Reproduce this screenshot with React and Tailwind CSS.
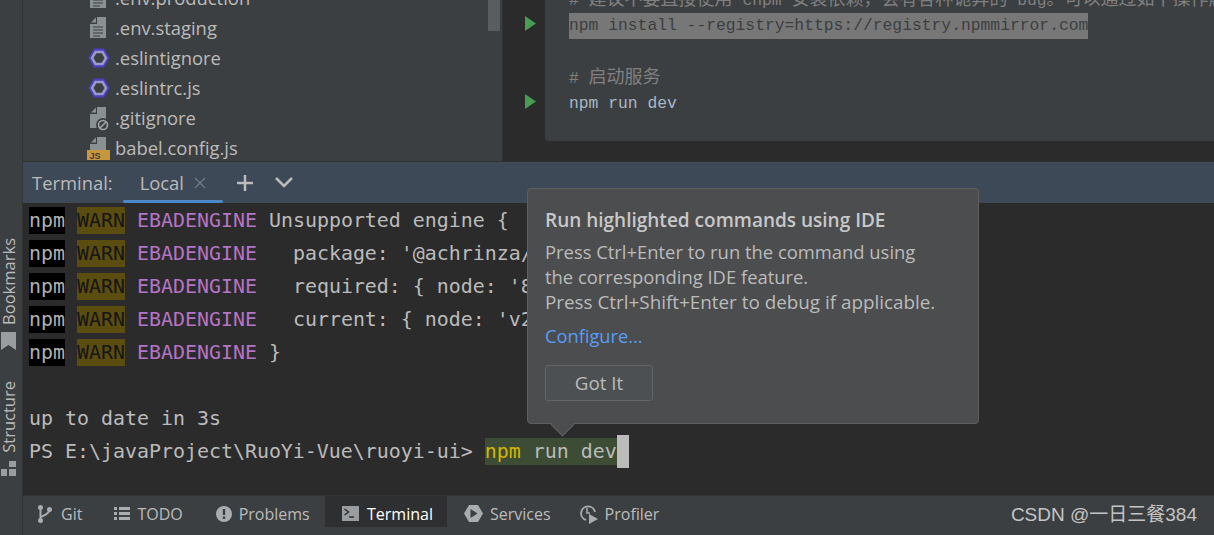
import React from 'react';

const mono = { fontFamily: '"DejaVu Sans Mono", monospace' };

const treeRows = [
	{ name: '.env.production', icon: 'doc' },
	{ name: '.env.staging', icon: 'doc' },
	{ name: '.eslintignore', icon: 'eslint' },
	{ name: '.eslintrc.js', icon: 'eslint' },
	{ name: '.gitignore', icon: 'ignore' },
	{ name: 'babel.config.js', icon: 'js' },
];

const TreeIcon = ({ kind }) => {
	if (kind === 'eslint') {
		return (
			<svg width="24" height="24" viewBox="0 0 24 24" className="shrink-0">
				<path d="M7 2.500h10l5.500 9.500-5.500 9.500H7L1.500 12z" fill="#4b3fc4" />
				<path d="M8.500 6h7l3.500 6-3.500 6h-7L5 12z" fill="#3c3f41" stroke="#9a9ac8" strokeWidth="2.500" />
			</svg>
		);
	}
	return (
		<svg width="24" height="24" viewBox="0 0 24 24" className="shrink-0 overflow-visible">
			<path d="M10 1h9v21H3V8h7z" fill="#8a9194" />
			<path d="M4 6.500L9 1.500v5z" fill="#8a9194" />
			{kind === 'doc' && (
				<path d="M6 11h10M6 14h10M6 17h10M6 20h7" stroke="#3c3f41" strokeWidth="1.200" />
			)}
			{kind === 'ignore' && (
				<>
					<circle cx="16" cy="19" r="7" fill="#3c3f41" />
					<circle cx="16" cy="19" r="4.500" fill="none" stroke="#a0a5a8" strokeWidth="1.600" />
					<path d="M13 22l6-6" stroke="#a0a5a8" strokeWidth="1.600" />
				</>
			)}
			{kind === 'js' && (
				<>
					<rect x="0" y="14" width="23" height="10" fill="#c8963c" />
					<text x="2.500" y="23" fontSize="9" fontWeight="700" fill="#3c3f41" fontFamily="Liberation Sans, sans-serif">JS</text>
				</>
			)}
		</svg>
	);
};

const RunIcon = () => (
	<svg width="11" height="15" viewBox="0 0 11 15" className="shrink-0">
		<path d="M0 0l11 7.500L0 15z" fill="#499c54" />
	</svg>
);

const lines = [
	{ rest: 'Unsupported engine {' },
	{ rest: "  package: '@achrinza/node-ipc@9.2.2'," },
	{ rest: "  required: { node: '8 || 10 || 12' }," },
	{ rest: "  current: { node: 'v20.11.0' }" },
	{ rest: '}' },
];

const toolTabs = [
	{ name: 'Git', icon: 'git', gap: 'gap-[9px]', left: 'ml-[15px]' },
	{ name: 'TODO', icon: 'todo', gap: 'gap-[7px]', left: 'ml-[32px]' },
	{ name: 'Problems', icon: 'problems', gap: 'gap-[7px]', left: 'ml-[33px]' },
];

const ToolIcon = ({ kind }) => {
	if (kind === 'git') {
		return (
			<svg width="14" height="18" viewBox="0 0 14 18" fill="none" stroke="#a9adb0" strokeWidth="2" className="shrink-0">
				<circle cx="2.500" cy="2.500" r="1.500" fill="#a9adb0" />
				<circle cx="2.500" cy="15.500" r="1.500" fill="#a9adb0" />
				<circle cx="11.500" cy="4.500" r="1.500" fill="#a9adb0" />
				<path d="M2.500 2.500v13M11.500 4.500c0 4-4 5-8 7.500" />
			</svg>
		);
	}
	if (kind === 'todo') {
		return (
			<svg width="16" height="13" viewBox="0 0 16 13" fill="#a9adb0" className="shrink-0">
				<path d="M0 0h3v3H0zM5 0h11v3H5zM0 5h3v3H0zM5 5h11v3H5zM0 10h3v3H0zM5 10h11v3H5z" />
			</svg>
		);
	}
	if (kind === 'problems') {
		return (
			<svg width="16" height="16" viewBox="0 0 16 16" className="shrink-0">
				<circle cx="8" cy="8" r="8" fill="#a9adb0" />
				<path d="M6.800 3h2.400v6H6.800zM6.800 10.500h2.400V13H6.800z" fill="#3c3f41" />
			</svg>
		);
	}
	if (kind === 'terminal') {
		return (
			<svg width="17" height="15" viewBox="0 0 17 15" className="shrink-0">
				<rect width="17" height="15" fill="#9a9da0" />
				<path d="M2.500 3l4 3-4 3" fill="none" stroke="#2d2f30" strokeWidth="1.500" />
				<path d="M7 11h5" stroke="#2d2f30" strokeWidth="1.500" />
			</svg>
		);
	}
	if (kind === 'services') {
		return (
			<svg width="19" height="17" viewBox="0 0 19 17" className="shrink-0">
				<path d="M5 0h9l5 8.500-5 8.500H5L0 8.500z" fill="#a9adb0" />
				<path d="M6.500 4l7 4.500-7 4.500z" fill="#3c3f41" />
			</svg>
		);
	}
	return (
		<svg width="20" height="20" viewBox="0 0 20 20" fill="none" className="shrink-0">
			<path d="M7 16a7 7 0 1 1 9-8" stroke="#a9adb0" strokeWidth="1.800" />
			<path d="M8 4v5h3" stroke="#a9adb0" strokeWidth="1.500" />
			<path d="M10 10l9 5-9 5z" fill="#a9adb0" />
		</svg>
	);
};

const App = () => {
	return (
		<div
			className="w-[1214px] h-[535px] overflow-hidden relative flex bg-[#2b2b2b] text-[#bbbbbb]"
			style={{ fontFamily: '"Open Sans", sans-serif' }}
		>
			{/* left tool strip */}
			<div className="w-[23px] shrink-0 bg-[#3c3f41] border-r border-[#323232] flex flex-col items-start pl-[1px] pt-[238px]">
				<div className="w-[15px] flex flex-col items-center">
					<div className="[writing-mode:vertical-rl] rotate-180 text-[16.500px] leading-[18px] text-center whitespace-nowrap">
						Bookmarks
					</div>
					<svg width="15" height="18" viewBox="0 0 15 18" className="mt-[7px] shrink-0">
						<path d="M0 0h15v18l-7.500-5L0 18z" fill="#9a9da0" />
					</svg>
					<div className="[writing-mode:vertical-rl] rotate-180 text-[16.500px] leading-[18px] mt-[31px] text-center whitespace-nowrap">
						Structure
					</div>
					<svg width="15" height="15" viewBox="0 0 15 15" fill="#9a9da0" className="mt-[8px] shrink-0">
						<path d="M8 0h7v6H8zM0 8h6v7H0zM8 8h7v7H8z" />
					</svg>
				</div>
			</div>

			<div className="flex-1 min-w-0 flex flex-col">
				{/* project tree + editor */}
				<div className="h-[162px] shrink-0 flex border-b border-[#323232]">
					<div className="w-[480px] shrink-0 bg-[#3c3f41] overflow-hidden relative border-r border-[#323232]">
						<div className="-mt-[17px] pl-[64px] flex flex-col">
							{treeRows.map((row) => (
								<div key={row.name} className="h-[30px] flex items-center gap-[4px] text-[18.400px] text-[#bbbbbb]">
									<TreeIcon kind={row.icon} />
									<span>{row.name}</span>
								</div>
							))}
						</div>
						<div className="absolute right-[2px] top-0 w-[12px] h-[31px] bg-[#5a5c5e]" />
					</div>
					<div className="w-[42px] shrink-0 bg-[#2b2b2b] flex flex-col items-start pl-[22px] pt-[16px]">
						<RunIcon />
						<div className="mt-[63px]">
							<RunIcon />
						</div>
					</div>
					<div className="flex-1 min-w-0 pb-[20px] bg-[#2b2b2b]">
						<div
							className="h-full bg-[#3c3f41] rounded-bl-[4px] pl-[24px] text-[16.330px] leading-[26px] overflow-hidden whitespace-nowrap"
							style={{ fontFamily: '"Liberation Mono", "Noto Sans CJK SC", monospace' }}
						>
							<div className="-mt-[13px] text-[#808080] h-[26px]">
								# <span className="text-[18px]">建议不要直接使用</span> cnpm <span className="text-[18px]">安装依赖，会有各种诡异的</span> bug<span className="text-[18px]">。可以通过如下操作解决</span>
							</div>
							<div className="h-[26px]">
								<span className="bg-[#777777] text-[#3c3f41] inline-block">npm install --registry=https://registry.npmmirror.com</span>
							</div>
							<div className="h-[26px]" />
							<div className="text-[#808080] h-[26px]">
								# <span className="text-[18px]">启动服务</span>
							</div>
							<div className="text-[#a9b7c6] h-[26px]">npm run dev</div>
						</div>
					</div>
				</div>

				{/* terminal header */}
				<div className="h-[41px] shrink-0 bg-[#3d4956] flex items-center pl-[9px] text-[18.400px]">
					<span className="text-[#bbbbbb]">Terminal:</span>
					<div className="relative h-full w-[100px] ml-[10px] pl-[17px] flex items-center">
						<span>Local</span>
						<svg width="12" height="12" viewBox="0 0 12 12" stroke="#6e7b88" strokeWidth="1.300" className="ml-[10px]">
							<path d="M1 1l10 10M11 1L1 11" />
						</svg>
						<div className="absolute left-0 right-0 bottom-0 h-[3px] rounded-full bg-[#4a88c7]" />
					</div>
					<svg width="16" height="16" viewBox="0 0 16 16" stroke="#bbbbbb" strokeWidth="2.500" className="ml-[14px]">
						<path d="M8 0v16M0 8h16" />
					</svg>
					<svg width="18" height="11" viewBox="0 0 18 11" fill="none" stroke="#bbbbbb" strokeWidth="2.500" className="ml-[22px]">
						<path d="M1 1l8 8 8-8" />
					</svg>
				</div>

				{/* terminal body */}
				<div className="flex-1 min-h-0 bg-[#2b2b2b] pl-[6px] pt-[1px] text-[19.930px] leading-[33px] whitespace-pre overflow-hidden" style={mono}>
					{lines.map((line, i) => (
						<div key={i} className="h-[33px] flex items-center">
							<span className="bg-black text-[#b0b0b0] h-[27px] leading-[27px]">npm</span>
							<span> </span>
							<span className="bg-[#5b4c10] text-[#161616] h-[27px] leading-[27px]">WARN</span>
							<span> </span>
							<span className="text-[#b574c4]">EBADENGINE</span>
							<span> </span>
							<span className="text-[#bbbbbb]">{line.rest}</span>
						</div>
					))}
					<div className="h-[33px]" />
					<div className="h-[33px]">up to date in 3s</div>
					<div className="h-[33px] flex items-center">
						<span>PS E:\javaProject\RuoYi-Vue\ruoyi-ui&gt; </span>
						<span className="bg-[#3c4c35] h-[27px] flex items-center">
							<span className="text-[#d6b500]">npm</span>
							<span> run dev</span>
						</span>
						<span className="w-[12px] h-[33px] bg-[#bbbbbb]" />
					</div>
				</div>

				{/* bottom tool bar */}
				<div className="h-[40px] shrink-0 bg-[#3c3f41] border-t border-[#323232] flex items-start text-[16px] relative">
					<div className="flex items-center h-[35px] w-[302px] shrink-0">
						{toolTabs.map((tab) => (
							<div key={tab.name} className={`flex items-center ${tab.gap} ${tab.left}`}>
								<ToolIcon kind={tab.icon} />
								<span>{tab.name}</span>
							</div>
						))}
					</div>
					<div className="h-[31px] w-[122px] shrink-0 bg-[#2d2f30] flex items-center pt-[4px] pl-[17px] gap-[8px] text-white">
						<ToolIcon kind="terminal" />
						<span>Terminal</span>
					</div>
					<div className="flex items-center h-[35px] gap-[7px] ml-[17px]">
						<ToolIcon kind="services" />
						<span>Services</span>
					</div>
					<div className="flex items-center h-[35px] gap-[6px] ml-[28px]">
						<ToolIcon kind="profiler" />
						<span>Profiler</span>
					</div>
					<span
						className="ml-auto mr-[17px] h-[39px] flex items-center text-[19px] text-[#c4c4c4]"
						style={{ fontFamily: '"Liberation Sans", "Noto Sans CJK SC", sans-serif' }}
					>
						CSDN @一日三餐384
					</span>
				</div>
			</div>

			{/* hint popup over the terminal */}
			<div className="absolute left-[527px] top-[188px] w-[452px] h-[236px] bg-[#4c4d4e] border border-[#5e6060] rounded-[4px] pl-[17px] pt-[19px] text-[#bbbbbb] text-[18.400px] leading-[25px]">
				<div className="font-semibold text-[19px] text-[#c8c8c8]">Run highlighted commands using IDE</div>
				<div className="mt-[6px]">
					<div>Press Ctrl+Enter to run the command using</div>
					<div>the corresponding IDE feature.</div>
					<div className="text-[18.850px] mt-[1px]">Press Ctrl+Shift+Enter to debug if applicable.</div>
				</div>
				<div className="mt-[8px] text-[18.250px] text-[#589df6]">Configure...</div>
				<div className="mt-[17px] w-[108px] h-[36px] rounded-[3px] border border-[#646567] bg-[#4c5052] flex items-center justify-center text-[18.800px]">
					Got It
				</div>
				<div className="absolute left-[26px] -bottom-[10px] w-[17px] h-[17px] rotate-45 bg-[#4c4d4e] border-r border-b border-[#5e6060]" />
			</div>
		</div>
	);
};

export default App;
